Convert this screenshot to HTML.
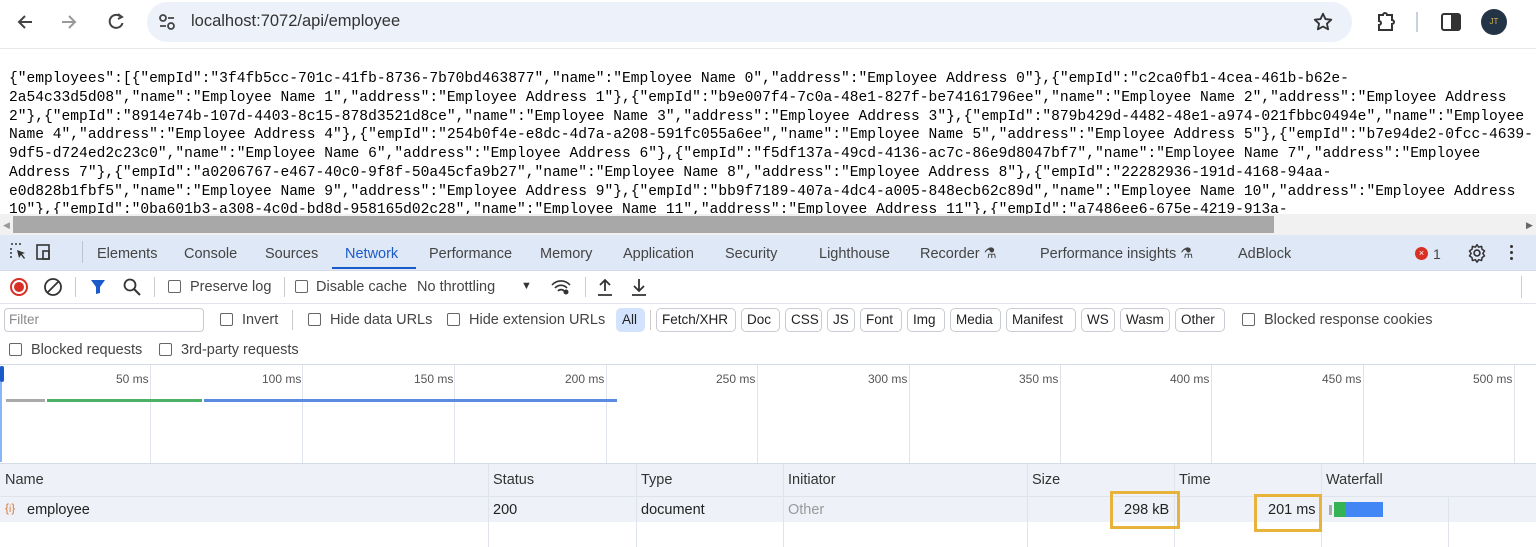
<!DOCTYPE html>
<html><head><meta charset="utf-8"><style>
*{margin:0;padding:0;box-sizing:border-box}
body{width:1536px;height:547px;overflow:hidden;background:#fff;font-family:"Liberation Sans",sans-serif;position:relative;color:#1f1f1f}
.a{position:absolute;white-space:nowrap}
.mono{font-family:"Liberation Mono",monospace;font-size:14.6px;line-height:18.75px;white-space:pre;color:#000}
.ui{font-size:14px;color:#444}
.cb{position:absolute;width:13px;height:13px;border:1px solid #666;border-radius:2px;background:#fff}
.chip{position:absolute;top:308px;height:24px;border:1px solid #c8ccd2;border-radius:5px;font-size:13.5px;line-height:22px;padding:0 5px;color:#222}
.vl{position:absolute;width:1px;background:#dfe3ea}
</style></head><body>
<div class="a" style="left:0;top:0;width:1536px;height:48px;background:#fff"></div>
<svg class="a" style="left:14px;top:10px" width="120" height="24" viewBox="0 0 120 24">
<path d="M18 12H6M11 6l-6 6 6 6" stroke="#444" stroke-width="2" fill="none"/>
<path d="M48 12h12M55 6l6 6-6 6" stroke="#999" stroke-width="2" fill="none"/>
<path d="M107 7a6.5 6.5 0 1 0 1.5 6" stroke="#444" stroke-width="2" fill="none"/><path d="M104 4l4 3-4 2" stroke="#444" stroke-width="2" fill="none"/>
</svg>
<div class="a" style="left:147px;top:2px;width:1205px;height:40px;border-radius:20px;background:#edf1f9"></div>
<svg class="a" style="left:157px;top:12px" width="20" height="20"><circle cx="6" cy="6" r="3" stroke="#444" stroke-width="1.8" fill="none"/><path d="M11 6h6M3 14h6" stroke="#444" stroke-width="1.8"/><circle cx="14" cy="14" r="3" stroke="#444" stroke-width="1.8" fill="none"/></svg>
<div class="a" style="left:191px;top:12px;font-size:16.5px;color:#333">localhost:7072/api/employee</div>
<svg class="a" style="left:1312px;top:11px" width="22" height="22" viewBox="0 0 24 24"><path d="M12 3l2.7 5.8 6.3.7-4.7 4.3 1.3 6.2L12 16.9 6.4 20l1.3-6.2L3 9.5l6.3-.7z" stroke="#333" stroke-width="2" fill="none" stroke-linejoin="round"/></svg>
<svg class="a" style="left:1374px;top:10px" width="24" height="24" viewBox="0 0 24 24"><path d="M5 5h4a2 2 0 0 1 4 0h5v5a2 2 0 0 1 0 4v6H5v-5a2 2 0 0 0 0-4z" stroke="#333" stroke-width="2" fill="none"/></svg>
<div class="a" style="left:1416px;top:12px;width:2px;height:20px;background:#c8d2df"></div>
<svg class="a" style="left:1440px;top:11px" width="22" height="22"><rect x="2" y="3" width="18" height="16" rx="2" stroke="#333" stroke-width="2" fill="none"/><rect x="11" y="3" width="9" height="16" fill="#333"/></svg>
<div class="a" style="left:1481px;top:9px;width:26px;height:26px;border-radius:50%;background:#243447;color:#d6b34a;font-size:8px;text-align:center;line-height:26px">JT</div>
<div class="a" style="left:0;top:48px;width:1536px;height:1px;background:#e8e8e8"></div>
<div class="a mono" style="left:9px;top:70px">{"employees":[{"empId":"3f4fb5cc-701c-41fb-8736-7b70bd463877","name":"Employee Name 0","address":"Employee Address 0"},{"empId":"c2ca0fb1-4cea-461b-b62e-
2a54c33d5d08","name":"Employee Name 1","address":"Employee Address 1"},{"empId":"b9e007f4-7c0a-48e1-827f-be74161796ee","name":"Employee Name 2","address":"Employee Address
2"},{"empId":"8914e74b-107d-4403-8c15-878d3521d8ce","name":"Employee Name 3","address":"Employee Address 3"},{"empId":"879b429d-4482-48e1-a974-021fbbc0494e","name":"Employee
Name 4","address":"Employee Address 4"},{"empId":"254b0f4e-e8dc-4d7a-a208-591fc055a6ee","name":"Employee Name 5","address":"Employee Address 5"},{"empId":"b7e94de2-0fcc-4639-
9df5-d724ed2c23c0","name":"Employee Name 6","address":"Employee Address 6"},{"empId":"f5df137a-49cd-4136-ac7c-86e9d8047bf7","name":"Employee Name 7","address":"Employee
Address 7"},{"empId":"a0206767-e467-40c0-9f8f-50a45cfa9b27","name":"Employee Name 8","address":"Employee Address 8"},{"empId":"22282936-191d-4168-94aa-
e0d828b1fbf5","name":"Employee Name 9","address":"Employee Address 9"},{"empId":"bb9f7189-407a-4dc4-a005-848ecb62c89d","name":"Employee Name 10","address":"Employee Address
10"},{"empId":"0ba601b3-a308-4c0d-bd8d-958165d02c28","name":"Employee Name 11","address":"Employee Address 11"},{"empId":"a7486ee6-675e-4219-913a-</div>
<div class="a" style="left:0;top:214px;width:1536px;height:21px;background:#f1f1f1"></div>
<div class="a" style="left:13px;top:216px;width:1261px;height:17px;background:#a8a8a8"></div>
<div class="a" style="left:3px;top:220px;font-size:9px;color:#999">◀</div>
<div class="a" style="left:1526px;top:220px;font-size:9px;color:#666">▶</div>
<div class="a" style="left:0;top:235px;width:1536px;height:35px;background:#dfe8f6"></div>
<svg class="a" style="left:10px;top:243px" width="46" height="20"><path d="M1 1h2M5 1h2M9 1h2M1 5v2M1 9v2M1 13v2" stroke="#333" stroke-width="1.5"/><path d="M7 7l8 3-3 1 3 4-1 1-3-4-2 3z" fill="#333"/><rect x="27" y="2" width="12" height="14" stroke="#333" stroke-width="1.6" fill="none"/><rect x="33" y="8" width="6" height="8" stroke="#333" stroke-width="1.6" fill="none"/></svg>
<div class="a" style="left:82px;top:241px;width:1px;height:22px;background:#b8c3d3"></div>
<div class="a ui" style="left:97px;top:246px;font-size:14.5px">Elements</div>
<div class="a ui" style="left:184px;top:246px;font-size:14.5px">Console</div>
<div class="a ui" style="left:265px;top:246px;font-size:14.5px">Sources</div>
<div class="a ui" style="left:345px;top:246px;font-size:14.5px;color:#1a5bc9">Network</div>
<div class="a" style="left:332px;top:267px;width:84px;height:2px;background:#1a5bc9"></div>
<div class="a ui" style="left:429px;top:246px;font-size:14.5px">Performance</div>
<div class="a ui" style="left:540px;top:246px;font-size:14.5px">Memory</div>
<div class="a ui" style="left:623px;top:246px;font-size:14.5px">Application</div>
<div class="a ui" style="left:725px;top:246px;font-size:14.5px">Security</div>
<div class="a ui" style="left:819px;top:246px;font-size:14.5px">Lighthouse</div>
<div class="a ui" style="left:920px;top:246px;font-size:14.5px">Recorder ⚗</div>
<div class="a ui" style="left:1040px;top:246px;font-size:14.5px">Performance insights ⚗</div>
<div class="a ui" style="left:1238px;top:246px;font-size:14.5px">AdBlock</div>
<div class="a" style="left:1415px;top:247px;width:13px;height:13px;border-radius:50%;background:#d93025;color:#fff;font-size:9px;text-align:center;line-height:13px">×</div>
<div class="a ui" style="left:1433px;top:246px">1</div>
<svg class="a" style="left:1467px;top:243px" width="20" height="20" viewBox="0 0 24 24"><circle cx="12" cy="12" r="3.5" stroke="#333" stroke-width="2" fill="none"/><path d="M12 2l2 3 3.5-1 .5 3.5 3 2-2 3 2 3-3 2-.5 3.5-3.5-1-2 3-2-3-3.5 1-.5-3.5-3-2 2-3-2-3 3-2 .5-3.5 3.5 1z" stroke="#333" stroke-width="1.8" fill="none" stroke-linejoin="round"/></svg>
<div class="a" style="left:1510px;top:245px;width:3px;height:3px;background:#333;border-radius:50%;box-shadow:0 6px #333,0 12px #333"></div>
<div class="a" style="left:0;top:270px;width:1536px;height:1px;background:#d4dbe6"></div>
<div class="a" style="left:10px;top:278px;width:18px;height:18px;border-radius:50%;border:2px solid #d93025"></div>
<div class="a" style="left:14px;top:282px;width:10px;height:10px;border-radius:50%;background:#d93025"></div>
<svg class="a" style="left:43px;top:277px" width="20" height="20"><circle cx="10" cy="10" r="8" stroke="#333" stroke-width="1.8" fill="none"/><path d="M4.5 15.5l11-11" stroke="#333" stroke-width="1.8"/></svg>
<div class="a" style="left:75px;top:277px;width:1px;height:20px;background:#ccc"></div>
<svg class="a" style="left:90px;top:279px" width="16" height="16"><path d="M1 1h14l-5 7v6l-4 1V8z" fill="#1a5bc9"/></svg>
<svg class="a" style="left:123px;top:278px" width="18" height="18"><circle cx="7" cy="7" r="5.5" stroke="#333" stroke-width="1.8" fill="none"/><path d="M11 11l6 6" stroke="#333" stroke-width="2"/></svg>
<div class="a" style="left:154px;top:277px;width:1px;height:20px;background:#ccc"></div>
<div class="cb" style="left:168px;top:280px"></div><div class="a ui" style="left:190px;top:279px;font-size:14.5px">Preserve log</div>
<div class="a" style="left:284px;top:277px;width:1px;height:20px;background:#ccc"></div>
<div class="cb" style="left:295px;top:280px"></div><div class="a ui" style="left:316px;top:279px;font-size:14.5px">Disable cache</div>
<div class="a ui" style="left:417px;top:279px;font-size:14.5px">No throttling</div>
<div class="a" style="left:521px;top:280px;font-size:11px;color:#333">▼</div>
<svg class="a" style="left:550px;top:278px" width="22" height="18"><path d="M2 7a12 12 0 0 1 18 0M5 10a8 8 0 0 1 12 0M8 13a4 4 0 0 1 6 0" stroke="#333" stroke-width="1.7" fill="none"/><circle cx="16" cy="14" r="2.5" fill="#333"/></svg>
<div class="a" style="left:585px;top:277px;width:1px;height:20px;background:#ccc"></div>
<svg class="a" style="left:596px;top:277px" width="60" height="20"><path d="M9 14V3M4 8l5-5 5 5M2 18h14" stroke="#333" stroke-width="1.8" fill="none"/><path d="M43 2v12M38 9l5 5 5-5M36 18h14" stroke="#333" stroke-width="1.8" fill="none"/></svg>
<div class="a" style="left:1521px;top:276px;width:1px;height:22px;background:#ccc"></div>
<div class="a" style="left:0;top:303px;width:1536px;height:1px;background:#e0e4ea"></div>
<div class="a" style="left:4px;top:308px;width:200px;height:24px;border:1px solid #c8ccd2;border-radius:4px;font-size:13.5px;color:#888;padding:3px 4px">Filter</div>
<div class="cb" style="left:220px;top:313px"></div><div class="a ui" style="left:242px;top:312px;font-size:14.5px">Invert</div>
<div class="a" style="left:292px;top:310px;width:1px;height:20px;background:#ccc"></div>
<div class="cb" style="left:308px;top:313px"></div><div class="a ui" style="left:330px;top:312px;font-size:14.5px">Hide data URLs</div>
<div class="cb" style="left:447px;top:313px"></div><div class="a ui" style="left:469px;top:312px;font-size:14.5px">Hide extension URLs</div>
<div class="chip" style="left:616px;width:29px;background:#d3e3fd;border-color:#d3e3fd">All</div>
<div class="a" style="left:650px;top:310px;width:1px;height:20px;background:#ccc"></div>
<div class="chip" style="left:656px;width:80px">Fetch/XHR</div>
<div class="chip" style="left:741px;width:39px">Doc</div>
<div class="chip" style="left:785px;width:37px">CSS</div>
<div class="chip" style="left:827px;width:28px">JS</div>
<div class="chip" style="left:860px;width:42px">Font</div>
<div class="chip" style="left:907px;width:38px">Img</div>
<div class="chip" style="left:950px;width:51px">Media</div>
<div class="chip" style="left:1006px;width:70px">Manifest</div>
<div class="chip" style="left:1081px;width:34px">WS</div>
<div class="chip" style="left:1120px;width:50px">Wasm</div>
<div class="chip" style="left:1175px;width:50px">Other</div>
<div class="cb" style="left:1242px;top:313px"></div><div class="a ui" style="left:1264px;top:312px;font-size:14.5px">Blocked response cookies</div>
<div class="cb" style="left:9px;top:343px"></div><div class="a ui" style="left:31px;top:342px;font-size:14.5px">Blocked requests</div>
<div class="cb" style="left:159px;top:343px"></div><div class="a ui" style="left:181px;top:342px;font-size:14.5px">3rd-party requests</div>
<div class="a" style="left:0;top:364px;width:1536px;height:1px;background:#d4dbe6"></div>
<div class="vl" style="left:150px;top:365px;height:98px"></div><div class="vl" style="left:302px;top:365px;height:98px"></div><div class="vl" style="left:454px;top:365px;height:98px"></div><div class="vl" style="left:606px;top:365px;height:98px"></div><div class="vl" style="left:757px;top:365px;height:98px"></div><div class="vl" style="left:909px;top:365px;height:98px"></div><div class="vl" style="left:1060px;top:365px;height:98px"></div><div class="vl" style="left:1211px;top:365px;height:98px"></div><div class="vl" style="left:1363px;top:365px;height:98px"></div><div class="vl" style="left:1514px;top:365px;height:98px"></div>
<div class="a" style="left:0;top:366px;width:2px;height:96px;background:#8ab4f8"></div>
<div class="a" style="left:0;top:366px;width:4px;height:16px;background:#1a5bc9;border-radius:2px"></div>
<div class="a" style="top:372px;font-size:12px;color:#555;left:116px">50 ms</div>
<div class="a" style="top:372px;font-size:12px;color:#555;left:262px">100 ms</div>
<div class="a" style="top:372px;font-size:12px;color:#555;left:414px">150 ms</div>
<div class="a" style="top:372px;font-size:12px;color:#555;left:565px">200 ms</div>
<div class="a" style="top:372px;font-size:12px;color:#555;left:716px">250 ms</div>
<div class="a" style="top:372px;font-size:12px;color:#555;left:868px">300 ms</div>
<div class="a" style="top:372px;font-size:12px;color:#555;left:1019px">350 ms</div>
<div class="a" style="top:372px;font-size:12px;color:#555;left:1170px">400 ms</div>
<div class="a" style="top:372px;font-size:12px;color:#555;left:1322px">450 ms</div>
<div class="a" style="top:372px;font-size:12px;color:#555;left:1473px">500 ms</div>
<div class="a" style="left:6px;top:399px;width:39px;height:3px;background:#aaa"></div>
<div class="a" style="left:47px;top:399px;width:155px;height:3px;background:#4cb066"></div>
<div class="a" style="left:204px;top:399px;width:413px;height:3px;background:#5a8be0"></div>
<div class="a" style="left:0;top:463px;width:1536px;height:33px;background:#eef2f8;border-top:1px solid #d4dbe6"></div>
<div class="a" style="left:0;top:496px;width:1536px;height:26px;background:#eef2f8;border-top:1px solid #dfe4ec"></div>
<div class="vl" style="left:488px;top:464px;height:83px"></div><div class="vl" style="left:636px;top:464px;height:83px"></div><div class="vl" style="left:783px;top:464px;height:83px"></div><div class="vl" style="left:1027px;top:464px;height:83px"></div><div class="vl" style="left:1174px;top:464px;height:83px"></div><div class="vl" style="left:1321px;top:464px;height:83px"></div><div class="vl" style="left:1448px;top:496px;height:51px"></div>
<div class="a ui" style="left:5px;top:472px;font-size:14.5px;color:#333">Name</div>
<div class="a ui" style="left:493px;top:472px;font-size:14.5px;color:#333">Status</div>
<div class="a ui" style="left:641px;top:472px;font-size:14.5px;color:#333">Type</div>
<div class="a ui" style="left:788px;top:472px;font-size:14.5px;color:#333">Initiator</div>
<div class="a ui" style="left:1032px;top:472px;font-size:14.5px;color:#333">Size</div>
<div class="a ui" style="left:1179px;top:472px;font-size:14.5px;color:#333">Time</div>
<div class="a ui" style="left:1326px;top:472px;font-size:14.5px;color:#333">Waterfall</div>
<div class="a" style="left:5px;top:501px;font-size:12px;color:#d9793a">{<span style="font-size:10px">i</span>}</div>
<div class="a ui" style="left:27px;top:502px;font-size:14.5px;color:#222">employee</div>
<div class="a ui" style="left:493px;top:502px;font-size:14.5px;color:#222">200</div>
<div class="a ui" style="left:641px;top:502px;font-size:14.5px;color:#222">document</div>
<div class="a ui" style="left:788px;top:502px;font-size:14.5px;color:#999">Other</div>
<div class="a ui" style="left:1124px;top:502px;font-size:14.5px;color:#222">298 kB</div>
<div class="a ui" style="left:1268px;top:502px;font-size:14.5px;color:#222">201 ms</div>
<div class="a" style="left:1110px;top:491px;width:70px;height:38px;border:3px solid #e8b33a"></div>
<div class="a" style="left:1254px;top:494px;width:68px;height:38px;border:3px solid #e8b33a"></div>
<div class="a" style="left:1329px;top:505px;width:3px;height:10px;background:#aaa"></div>
<div class="a" style="left:1334px;top:502px;width:12px;height:15px;background:#34b355"></div>
<div class="a" style="left:1346px;top:502px;width:37px;height:15px;background:#4285f4"></div>
</body></html>
